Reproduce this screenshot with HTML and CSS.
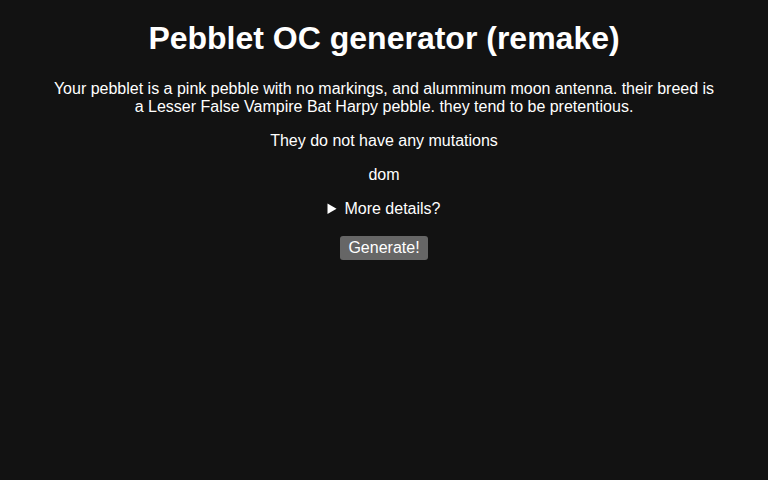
FILE: index.html
```html
<!DOCTYPE html>
<html lang="en">
<head>
    <meta charset="utf-8">
    <title>Pebblet OC generator (remake)</title>
    <link rel="stylesheet" href="styles.css">
</head>
<body>
    <main class="generator">
        <h1 class="title">Pebblet OC generator (remake)</h1>
        <p class="description">Your pebblet is a pink pebble with no markings, and alumminum moon antenna. their breed is a Lesser False Vampire Bat Harpy pebble. they tend to be pretentious.</p>
        <p class="mutations">They do not have any mutations</p>
        <p class="owner">dom</p>
        <details class="more">
            <summary>More details?</summary>
            <p>No further details.</p>
        </details>
        <div class="actions">
            <button class="generate" type="button">Generate!</button>
        </div>
    </main>
</body>
</html>
```

FILE: styles.css
```css
html {
    background: #121212;
}
body {
    margin: 0 8px;
    color: #fff;
    font-family: "Liberation Sans", Arial, sans-serif;
    font-size: 16px;
    text-align: center;
}
.title {
    font-size: 32px;
    margin: 20px 0 23px;
}
.description {
    max-width: 666px;
    margin: 16px auto;
}
.more summary {
    cursor: pointer;
}
.actions {
    margin-top: 18px;
}
.generate {
    font-family: "Liberation Sans", Arial, sans-serif;
    font-size: 16px;
    color: #fff;
    background: #666;
    border: none;
    border-radius: 3px;
    height: 24px;
    padding: 0 8px;
}
```
